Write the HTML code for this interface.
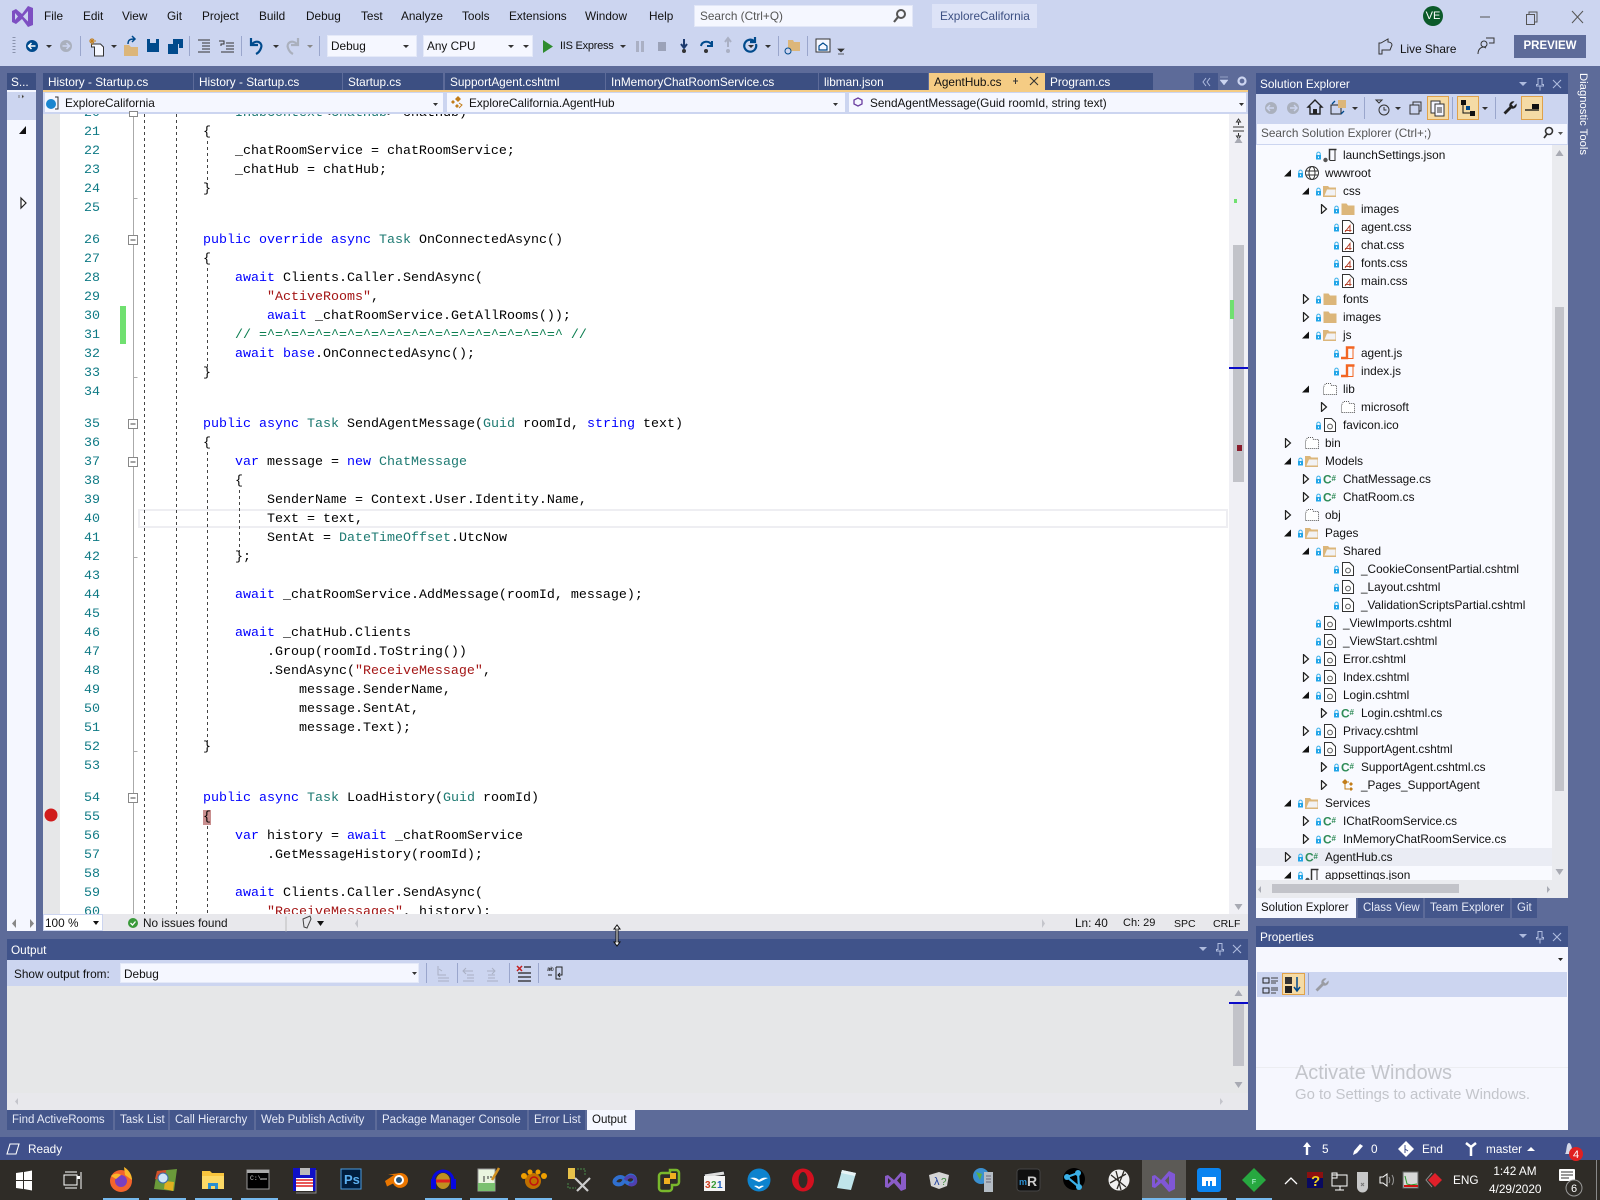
<!DOCTYPE html>
<html><head><meta charset="utf-8"><title>ExploreCalifornia</title>
<style>
*{box-sizing:border-box}
html,body{margin:0;padding:0}
body{width:1600px;height:1200px;overflow:hidden;position:relative;background:#5d6b99;font:11.8px "Liberation Sans",sans-serif;color:#111}
.a{position:absolute}
.x{position:absolute;white-space:nowrap;line-height:16px}
#top{left:0;top:0;width:1600px;height:66px;background:#ccd5f0}
.tab{position:absolute;top:73px;height:17px;background:#3c4f82;color:#fff;line-height:18px;padding-left:5px;white-space:nowrap;overflow:hidden}
.cb{position:absolute;background:#f5f7ff;border:1px solid #e4e9f8}
.nav{position:absolute;top:92px;height:22px;background:#f5f7ff;border:2px solid #ccd5f0;border-top:1px solid #ccd5f0;line-height:21px;white-space:nowrap}
#code{left:43px;top:114px;width:1186px;height:800px;overflow:hidden;background:#fff}
#lines{position:absolute;left:0;top:-10px;width:1186px;font:13.33px/19px "Liberation Mono",monospace;color:#000}
.l{height:19px;position:relative;white-space:pre;padding-left:96px}
.l b{position:absolute;left:0;width:57px;text-align:right;font-weight:normal;color:#0f7a85}
.g{margin-top:13px}
i{font-style:normal}
.k{color:#0000ff}.t{color:#1e7a72}.s{color:#a31515}.c{color:#0a7d4f}
.st{position:absolute;white-space:nowrap;line-height:16px;color:#fff}
#tree{left:1256px;top:145px;width:296px;height:744px;overflow:hidden;background:#f9faff}
#rows{position:absolute;left:0;top:1px;width:296px}
.r{height:18px;position:relative;white-space:nowrap}
.r svg{position:absolute;top:1px}
.r span{position:absolute;top:1px;line-height:16px;left:calc(var(--T) + 0px)}
.A{--T:69px}.B{--T:87px}.C{--T:105px}
.r .e{left:calc(var(--T) - 41px);top:4px}
.r .lk{left:calc(var(--T) - 28px);top:5px}
.r .ic{left:calc(var(--T) - 21px)}
.btab{position:absolute;height:20px;line-height:21px;padding-left:5px;background:#44568b;color:#e6eaf7;white-space:nowrap;font-size:11.5px;overflow:hidden}
</style></head><body>
<svg width="0" height="0" style="position:absolute"><defs>
<symbol id="op" viewBox="0 0 8 10"><path d="M7 1.5V8.5H0z" fill="#111"/></symbol>
<symbol id="cl" viewBox="0 0 8 10"><path d="M1.5 .5L6.5 5 1.5 9.500z" fill="#fff" stroke="#222" stroke-width="1.200"/></symbol>
<symbol id="lk" viewBox="0 0 7 10"><path d="M1.800 4V2.800a1.700 1.700 0 0 1 3.400 0V4" fill="none" stroke="#3ab0ea" stroke-width="1"/><rect x="1" y="4" width="5" height="4.500" fill="#22a5e8"/><rect x="3" y="5.500" width="1" height="1.500" fill="#fff"/></symbol>
<symbol id="f" viewBox="0 0 16 16"><path d="M1.500 2.500h5l1.500 2h6.500v9.500H1.500z" fill="#dcb67a"/></symbol>
<symbol id="fo" viewBox="0 0 16 16"><path d="M1 3h5l1.500 1.500H14V14H1z" fill="#dcb67a"/><path d="M2.500 12.500L5 6.500h8.500v6z" fill="#f2f2f4"/></symbol>
<symbol id="fd" viewBox="0 0 16 16"><path d="M1.500 13.500V6l2-3.500h5l1 2h5v9z" fill="#fff" stroke="#555" stroke-dasharray="1 1"/></symbol>
<symbol id="css" viewBox="0 0 16 16"><path d="M2.500 1.500h7l4 4v9h-11z" fill="#fff" stroke="#333"/><path d="M5 13L10 6.500V13M5 11.500h6.500" fill="none" stroke="#b5432c"/></symbol>
<symbol id="doc" viewBox="0 0 16 16"><path d="M2.500 1.500h7l4 4v9h-11z" fill="#fff" stroke="#333"/><circle cx="8" cy="9.500" r="2.400" fill="none" stroke="#555"/></symbol>
<symbol id="js" viewBox="0 0 16 16"><path d="M14.500 2.500H7v10.500H1" fill="none" stroke="#f26522" stroke-width="2.400"/><path d="M13 3v10.500H7" fill="none" stroke="#f26522"/></symbol>
<symbol id="json" viewBox="0 0 16 16"><path d="M14.500 2.500H7.500v10.500" fill="none" stroke="#333" stroke-width="1.500"/><path d="M13 3v10.500H7.500" fill="none" stroke="#333"/><circle cx="3.500" cy="13" r="2.200" fill="#555"/></symbol>
<symbol id="glob" viewBox="0 0 16 16"><circle cx="8" cy="8" r="6.500" fill="#fff" stroke="#333"/><ellipse cx="8" cy="8" rx="3" ry="6.500" fill="none" stroke="#333"/><path d="M1.500 6h13M1.500 10h13" stroke="#333"/></symbol>
<symbol id="cs" viewBox="0 0 16 16"><text x="1" y="12.500" font-family="Liberation Sans" font-weight="bold" font-size="12" fill="#2e8b57">C</text><text x="9.500" y="10" font-family="Liberation Sans" font-weight="bold" font-size="8" fill="#2e8b57">#</text></symbol>
<symbol id="cl2" viewBox="0 0 16 16"><path d="M2 5l3-3 3 3-3 3zM9 7l2-2 2 2-2 2zM9 12l2-2 2 2-2 2z" fill="#c27d1a"/><path d="M5 8v4h4M8 5h1" stroke="#c27d1a" fill="none"/></symbol>
<symbol id="pin" viewBox="0 0 10 14"><path d="M3 1.500h4v6h1.500v1.500h-7V7.500H3zM5 9v4.500" fill="none" stroke="currentColor"/></symbol>
<symbol id="xx" viewBox="0 0 10 10"><path d="M1 1l8 8M9 1l-8 8" stroke="currentColor" stroke-width="1.100" fill="none"/></symbol>
<symbol id="dn" viewBox="0 0 8 4"><path d="M0 0h8L4 4z" fill="currentColor"/></symbol>
<symbol id="wr" viewBox="0 0 16 16"><path d="M14.500 3.500l-3 3-2-2 3-3a4 4 0 0 0-5 5L1.500 12.500l2 2 6-6a4 4 0 0 0 5-5z" fill="currentColor"/></symbol>
</defs></svg>

<div class="a" id="top"></div>
<div class="a" style="left:0;top:66px;width:7px;height:1071px;background:#5d6b99"></div>

<!-- menu -->
<span class="x" style="left:44px;top:8px">File</span><span class="x" style="left:83px;top:8px">Edit</span><span class="x" style="left:122px;top:8px">View</span><span class="x" style="left:167px;top:8px">Git</span><span class="x" style="left:202px;top:8px">Project</span><span class="x" style="left:259px;top:8px">Build</span><span class="x" style="left:306px;top:8px">Debug</span><span class="x" style="left:361px;top:8px">Test</span><span class="x" style="left:401px;top:8px">Analyze</span><span class="x" style="left:462px;top:8px">Tools</span><span class="x" style="left:509px;top:8px">Extensions</span><span class="x" style="left:585px;top:8px">Window</span><span class="x" style="left:649px;top:8px">Help</span>
<div class="a" style="left:694px;top:5px;width:219px;height:22px;background:#f5f7ff;border:1px solid #e2e7f7"></div>
<span class="x" style="left:700px;top:8px;color:#555">Search (Ctrl+Q)</span>
<div class="a" style="left:932px;top:4px;width:105px;height:24px;background:#dde3f7"></div>
<span class="x" style="left:940px;top:8px;color:#3c4f82">ExploreCalifornia</span>
<div class="a" style="left:1423px;top:6px;width:20px;height:20px;border-radius:50%;background:#0b5a2a;color:#fff;text-align:center;line-height:20px;font-size:11px">VE</div>

<!-- toolbar combos -->
<div class="cb" style="left:327px;top:35px;width:90px;height:22px"></div><span class="x" style="left:331px;top:38px">Debug</span>
<div class="cb" style="left:423px;top:35px;width:110px;height:22px"></div><span class="x" style="left:427px;top:38px">Any CPU</span>
<span class="x" style="left:560px;top:38px;font-size:11px;letter-spacing:-.25px">IIS Express</span>
<span class="x" style="left:1400px;top:41px">Live Share</span>
<div class="a" style="left:1514px;top:35px;width:72px;height:23px;background:#5d6b99;color:#fff;font-weight:bold;font-size:11.500px;text-align:center;line-height:23px">PREVIEW</div>

<!-- left sidebar -->
<div class="a" style="left:7px;top:73px;width:29px;height:858px;background:#f5f7ff"></div>
<div class="a" style="left:7px;top:73px;width:29px;height:17px;background:#3c4f82;color:#fff;padding-left:4px;line-height:18px">S...</div>
<div class="a" style="left:7px;top:92px;width:29px;height:28px;background:#ccd5f0"></div>

<!-- tabs -->
<div class="tab" style="left:43px;width:150px">History - Startup.cs</div>
<div class="tab" style="left:194px;width:148px">History - Startup.cs</div>
<div class="tab" style="left:343px;width:100px">Startup.cs</div>
<div class="tab" style="left:445px;width:160px">SupportAgent.cshtml</div>
<div class="tab" style="left:606px;width:212px">InMemoryChatRoomService.cs</div>
<div class="tab" style="left:819px;width:109px">libman.json</div>
<div class="tab" style="left:929px;width:116px;background:#f5cc84;color:#111">AgentHub.cs</div>
<div class="tab" style="left:1045px;width:108px">Program.cs</div>
<div class="a" style="left:1194px;top:73px;width:24px;height:17px;background:#44568b"></div>
<div class="a" style="left:43px;top:90px;width:1205px;height:2px;background:#f5cc84"></div>

<!-- nav bar -->
<div class="nav" style="left:43px;width:402px;padding-left:20px">ExploreCalifornia</div>
<div class="nav" style="left:445px;width:402px;padding-left:22px">ExploreCalifornia.AgentHub</div>
<div class="nav" style="left:847px;width:401px;padding-left:21px">SendAgentMessage(Guid roomId, string text)</div>

<!-- editor -->
<div class="a" id="code">
<div class="a" style="left:0;top:0;width:17px;height:800px;background:#e6e7e8"></div>
<div class="a" style="left:95px;top:395px;width:1090px;height:19px;border:2px solid #eeeef2"></div>
<div id="lines">
<div class="l"><b>20</b>            <i class="t">IHubContext</i>&lt;<i class="t">ChatHub</i>&gt; chatHub)</div>
<div class="l"><b>21</b>        {</div>
<div class="l"><b>22</b>            _chatRoomService = chatRoomService;</div>
<div class="l"><b>23</b>            _chatHub = chatHub;</div>
<div class="l"><b>24</b>        }</div>
<div class="l"><b>25</b></div>
<div class="l g"><b>26</b>        <i class="k">public</i> <i class="k">override</i> <i class="k">async</i> <i class="t">Task</i> OnConnectedAsync()</div>
<div class="l"><b>27</b>        {</div>
<div class="l"><b>28</b>            <i class="k">await</i> Clients.Caller.SendAsync(</div>
<div class="l"><b>29</b>                <i class="s">"ActiveRooms"</i>,</div>
<div class="l"><b>30</b>                <i class="k">await</i> _chatRoomService.GetAllRooms());</div>
<div class="l"><b>31</b>            <i class="c">// =^=^=^=^=^=^=^=^=^=^=^=^=^=^=^=^=^=^=^ //</i></div>
<div class="l"><b>32</b>            <i class="k">await</i> <i class="k">base</i>.OnConnectedAsync();</div>
<div class="l"><b>33</b>        }</div>
<div class="l"><b>34</b></div>
<div class="l g"><b>35</b>        <i class="k">public</i> <i class="k">async</i> <i class="t">Task</i> SendAgentMessage(<i class="t">Guid</i> roomId, <i class="k">string</i> text)</div>
<div class="l"><b>36</b>        {</div>
<div class="l"><b>37</b>            <i class="k">var</i> message = <i class="k">new</i> <i class="t">ChatMessage</i></div>
<div class="l"><b>38</b>            {</div>
<div class="l"><b>39</b>                SenderName = Context.User.Identity.Name,</div>
<div class="l"><b>40</b>                Text = text,</div>
<div class="l"><b>41</b>                SentAt = <i class="t">DateTimeOffset</i>.UtcNow</div>
<div class="l"><b>42</b>            };</div>
<div class="l"><b>43</b></div>
<div class="l"><b>44</b>            <i class="k">await</i> _chatRoomService.AddMessage(roomId, message);</div>
<div class="l"><b>45</b></div>
<div class="l"><b>46</b>            <i class="k">await</i> _chatHub.Clients</div>
<div class="l"><b>47</b>                .Group(roomId.ToString())</div>
<div class="l"><b>48</b>                .SendAsync(<i class="s">"ReceiveMessage"</i>,</div>
<div class="l"><b>49</b>                    message.SenderName,</div>
<div class="l"><b>50</b>                    message.SentAt,</div>
<div class="l"><b>51</b>                    message.Text);</div>
<div class="l"><b>52</b>        }</div>
<div class="l"><b>53</b></div>
<div class="l g"><b>54</b>        <i class="k">public</i> <i class="k">async</i> <i class="t">Task</i> LoadHistory(<i class="t">Guid</i> roomId)</div>
<div class="l"><b>55</b>        <i style="background:#c98f8f">{</i></div>
<div class="l"><b>56</b>            <i class="k">var</i> history = <i class="k">await</i> _chatRoomService</div>
<div class="l"><b>57</b>                .GetMessageHistory(roomId);</div>
<div class="l"><b>58</b></div>
<div class="l"><b>59</b>            <i class="k">await</i> Clients.Caller.SendAsync(</div>
<div class="l"><b>60</b>                <i class="s">"ReceiveMessages"</i>, history);</div>
</div>
</div>

<!-- editor scrollbar -->
<div class="a" style="left:1229px;top:114px;width:19px;height:800px;background:#f0f0f5"></div>
<div class="a" style="left:1233px;top:245px;width:11px;height:237px;background:#c2c3c9"></div>

<!-- editor status -->
<div class="a" style="left:43px;top:914px;width:1205px;height:17px;background:#e8e8ec"></div>
<div class="a" style="left:43px;top:914px;width:60px;height:17px;background:#fff;border:1px solid #ccd5f0"></div>
<span class="x" style="left:45px;top:915px">100 %</span>
<span class="x" style="left:143px;top:915px">No issues found</span>
<span class="x" style="left:1075px;top:915px">Ln: 40</span>
<span class="x" style="left:1123px;top:915px;font-size:11px">Ch: 29</span>
<span class="x" style="left:1174px;top:916px;font-size:10.5px">SPC</span>
<span class="x" style="left:1213px;top:916px;font-size:10.5px">CRLF</span>

<!-- output -->
<div class="a" style="left:7px;top:939px;width:1241px;height:21px;background:#40538a"></div>
<span class="x" style="left:11px;top:942px;color:#fff">Output</span>
<div class="a" style="left:7px;top:960px;width:1241px;height:26px;background:#ccd5f0"></div>
<span class="x" style="left:14px;top:966px">Show output from:</span>
<div class="cb" style="left:120px;top:963px;width:299px;height:20px"></div>
<span class="x" style="left:124px;top:966px">Debug</span>
<div class="a" style="left:7px;top:986px;width:1241px;height:124px;background:#e6e7e8"></div>
<div class="a" style="left:7px;top:1093px;width:1241px;height:17px;background:#e8e8ec"></div>
<div class="a" style="left:1233px;top:1003px;width:11px;height:63px;background:#c2c3c9"></div>
<div class="btab" style="left:7px;top:1110px;width:106px">Find ActiveRooms</div>
<div class="btab" style="left:115px;top:1110px;width:53px">Task List</div>
<div class="btab" style="left:170px;top:1110px;width:84px">Call Hierarchy</div>
<div class="btab" style="left:256px;top:1110px;width:119px">Web Publish Activity</div>
<div class="btab" style="left:377px;top:1110px;width:150px">Package Manager Console</div>
<div class="btab" style="left:529px;top:1110px;width:56px">Error List</div>
<div class="btab" style="left:587px;top:1110px;width:48px;background:#f5f7ff;color:#111">Output</div>

<!-- solution explorer -->
<div class="a" style="left:1256px;top:73px;width:312px;height:21px;background:#40538a"></div>
<span class="x" style="left:1260px;top:76px;color:#fff">Solution Explorer</span>
<div class="a" style="left:1256px;top:94px;width:312px;height:29px;background:#ccd5f0"></div>
<div class="a" style="left:1256px;top:123px;width:312px;height:22px;background:#f5f7ff;border:1px solid #ccd5f0"></div>
<span class="x" style="left:1261px;top:125px;color:#555">Search Solution Explorer (Ctrl+;)</span>
<div class="a" id="tree"><div id="rows">
<div class="r B"><svg class="lk" width="7" height="10"><use href="#lk"/></svg><svg class="ic" width="16" height="16"><use href="#json"/></svg><span>launchSettings.json</span></div>
<div class="r A"><svg class="e" width="8" height="10"><use href="#op"/></svg><svg class="lk" width="7" height="10"><use href="#lk"/></svg><svg class="ic" width="16" height="16"><use href="#glob"/></svg><span style="left:69px">wwwroot</span></div>
<div class="r B"><svg class="e" width="8" height="10"><use href="#op"/></svg><svg class="lk" width="7" height="10"><use href="#lk"/></svg><svg class="ic" width="16" height="16"><use href="#fo"/></svg><span>css</span></div>
<div class="r C"><svg class="e" width="8" height="10"><use href="#cl"/></svg><svg class="lk" width="7" height="10"><use href="#lk"/></svg><svg class="ic" width="16" height="16"><use href="#f"/></svg><span>images</span></div>
<div class="r C"><svg class="lk" width="7" height="10"><use href="#lk"/></svg><svg class="ic" width="16" height="16"><use href="#css"/></svg><span>agent.css</span></div>
<div class="r C"><svg class="lk" width="7" height="10"><use href="#lk"/></svg><svg class="ic" width="16" height="16"><use href="#css"/></svg><span>chat.css</span></div>
<div class="r C"><svg class="lk" width="7" height="10"><use href="#lk"/></svg><svg class="ic" width="16" height="16"><use href="#css"/></svg><span>fonts.css</span></div>
<div class="r C"><svg class="lk" width="7" height="10"><use href="#lk"/></svg><svg class="ic" width="16" height="16"><use href="#css"/></svg><span>main.css</span></div>
<div class="r B"><svg class="e" width="8" height="10"><use href="#cl"/></svg><svg class="lk" width="7" height="10"><use href="#lk"/></svg><svg class="ic" width="16" height="16"><use href="#f"/></svg><span>fonts</span></div>
<div class="r B"><svg class="e" width="8" height="10"><use href="#cl"/></svg><svg class="lk" width="7" height="10"><use href="#lk"/></svg><svg class="ic" width="16" height="16"><use href="#f"/></svg><span>images</span></div>
<div class="r B"><svg class="e" width="8" height="10"><use href="#op"/></svg><svg class="lk" width="7" height="10"><use href="#lk"/></svg><svg class="ic" width="16" height="16"><use href="#fo"/></svg><span>js</span></div>
<div class="r C"><svg class="lk" width="7" height="10"><use href="#lk"/></svg><svg class="ic" width="16" height="16"><use href="#js"/></svg><span>agent.js</span></div>
<div class="r C"><svg class="lk" width="7" height="10"><use href="#lk"/></svg><svg class="ic" width="16" height="16"><use href="#js"/></svg><span>index.js</span></div>
<div class="r B"><svg class="e" width="8" height="10"><use href="#op"/></svg><svg class="ic" width="16" height="16"><use href="#fd"/></svg><span>lib</span></div>
<div class="r C"><svg class="e" width="8" height="10"><use href="#cl"/></svg><svg class="ic" width="16" height="16"><use href="#fd"/></svg><span>microsoft</span></div>
<div class="r B"><svg class="lk" width="7" height="10"><use href="#lk"/></svg><svg class="ic" width="16" height="16"><use href="#doc"/></svg><span>favicon.ico</span></div>
<div class="r A"><svg class="e" width="8" height="10"><use href="#cl"/></svg><svg class="ic" width="16" height="16"><use href="#fd"/></svg><span>bin</span></div>
<div class="r A"><svg class="e" width="8" height="10"><use href="#op"/></svg><svg class="lk" width="7" height="10"><use href="#lk"/></svg><svg class="ic" width="16" height="16"><use href="#fo"/></svg><span>Models</span></div>
<div class="r B"><svg class="e" width="8" height="10"><use href="#cl"/></svg><svg class="lk" width="7" height="10"><use href="#lk"/></svg><svg class="ic" width="16" height="16"><use href="#cs"/></svg><span>ChatMessage.cs</span></div>
<div class="r B"><svg class="e" width="8" height="10"><use href="#cl"/></svg><svg class="lk" width="7" height="10"><use href="#lk"/></svg><svg class="ic" width="16" height="16"><use href="#cs"/></svg><span>ChatRoom.cs</span></div>
<div class="r A"><svg class="e" width="8" height="10"><use href="#cl"/></svg><svg class="ic" width="16" height="16"><use href="#fd"/></svg><span>obj</span></div>
<div class="r A"><svg class="e" width="8" height="10"><use href="#op"/></svg><svg class="lk" width="7" height="10"><use href="#lk"/></svg><svg class="ic" width="16" height="16"><use href="#fo"/></svg><span>Pages</span></div>
<div class="r B"><svg class="e" width="8" height="10"><use href="#op"/></svg><svg class="lk" width="7" height="10"><use href="#lk"/></svg><svg class="ic" width="16" height="16"><use href="#fo"/></svg><span>Shared</span></div>
<div class="r C"><svg class="lk" width="7" height="10"><use href="#lk"/></svg><svg class="ic" width="16" height="16"><use href="#doc"/></svg><span>_CookieConsentPartial.cshtml</span></div>
<div class="r C"><svg class="lk" width="7" height="10"><use href="#lk"/></svg><svg class="ic" width="16" height="16"><use href="#doc"/></svg><span>_Layout.cshtml</span></div>
<div class="r C"><svg class="lk" width="7" height="10"><use href="#lk"/></svg><svg class="ic" width="16" height="16"><use href="#doc"/></svg><span>_ValidationScriptsPartial.cshtml</span></div>
<div class="r B"><svg class="lk" width="7" height="10"><use href="#lk"/></svg><svg class="ic" width="16" height="16"><use href="#doc"/></svg><span>_ViewImports.cshtml</span></div>
<div class="r B"><svg class="lk" width="7" height="10"><use href="#lk"/></svg><svg class="ic" width="16" height="16"><use href="#doc"/></svg><span>_ViewStart.cshtml</span></div>
<div class="r B"><svg class="e" width="8" height="10"><use href="#cl"/></svg><svg class="lk" width="7" height="10"><use href="#lk"/></svg><svg class="ic" width="16" height="16"><use href="#doc"/></svg><span>Error.cshtml</span></div>
<div class="r B"><svg class="e" width="8" height="10"><use href="#cl"/></svg><svg class="lk" width="7" height="10"><use href="#lk"/></svg><svg class="ic" width="16" height="16"><use href="#doc"/></svg><span>Index.cshtml</span></div>
<div class="r B"><svg class="e" width="8" height="10"><use href="#op"/></svg><svg class="lk" width="7" height="10"><use href="#lk"/></svg><svg class="ic" width="16" height="16"><use href="#doc"/></svg><span>Login.cshtml</span></div>
<div class="r C"><svg class="e" width="8" height="10"><use href="#cl"/></svg><svg class="lk" width="7" height="10"><use href="#lk"/></svg><svg class="ic" width="16" height="16"><use href="#cs"/></svg><span>Login.cshtml.cs</span></div>
<div class="r B"><svg class="e" width="8" height="10"><use href="#cl"/></svg><svg class="lk" width="7" height="10"><use href="#lk"/></svg><svg class="ic" width="16" height="16"><use href="#doc"/></svg><span>Privacy.cshtml</span></div>
<div class="r B"><svg class="e" width="8" height="10"><use href="#op"/></svg><svg class="lk" width="7" height="10"><use href="#lk"/></svg><svg class="ic" width="16" height="16"><use href="#doc"/></svg><span>SupportAgent.cshtml</span></div>
<div class="r C"><svg class="e" width="8" height="10"><use href="#cl"/></svg><svg class="lk" width="7" height="10"><use href="#lk"/></svg><svg class="ic" width="16" height="16"><use href="#cs"/></svg><span>SupportAgent.cshtml.cs</span></div>
<div class="r C"><svg class="e" width="8" height="10"><use href="#cl"/></svg><svg class="ic" width="16" height="16"><use href="#cl2"/></svg><span>_Pages_SupportAgent</span></div>
<div class="r A"><svg class="e" width="8" height="10"><use href="#op"/></svg><svg class="lk" width="7" height="10"><use href="#lk"/></svg><svg class="ic" width="16" height="16"><use href="#fo"/></svg><span>Services</span></div>
<div class="r B"><svg class="e" width="8" height="10"><use href="#cl"/></svg><svg class="lk" width="7" height="10"><use href="#lk"/></svg><svg class="ic" width="16" height="16"><use href="#cs"/></svg><span>IChatRoomService.cs</span></div>
<div class="r B"><svg class="e" width="8" height="10"><use href="#cl"/></svg><svg class="lk" width="7" height="10"><use href="#lk"/></svg><svg class="ic" width="16" height="16"><use href="#cs"/></svg><span>InMemoryChatRoomService.cs</span></div>
<div class="r A" style="background:#eaecf4"><svg class="e" width="8" height="10"><use href="#cl"/></svg><svg class="lk" width="7" height="10"><use href="#lk"/></svg><svg class="ic" width="16" height="16"><use href="#cs"/></svg><span>AgentHub.cs</span></div>
<div class="r A"><svg class="e" width="8" height="10"><use href="#op"/></svg><svg class="lk" width="7" height="10"><use href="#lk"/></svg><svg class="ic" width="16" height="16"><use href="#json"/></svg><span>appsettings.json</span></div>
</div></div>
<div class="a" style="left:1552px;top:145px;width:16px;height:744px;background:#eaebef"></div>
<div class="a" style="left:1555px;top:307px;width:9px;height:484px;background:#c2c3c9"></div>
<div class="a" style="left:1256px;top:880px;width:312px;height:18px;background:#eaebef"></div>
<div class="a" style="left:1272px;top:884px;width:187px;height:9px;background:#c2c3c9"></div>
<div class="btab" style="left:1256px;top:898px;width:100px;background:#f5f7ff;color:#111">Solution Explorer</div>
<div class="btab" style="left:1358px;top:898px;width:65px">Class View</div>
<div class="btab" style="left:1425px;top:898px;width:85px">Team Explorer</div>
<div class="btab" style="left:1512px;top:898px;width:25px">Git</div>
<div class="a" style="left:1576px;top:73px;height:90px;writing-mode:vertical-rl;color:#fff;white-space:nowrap;line-height:14px;font-size:11.3px">Diagnostic Tools</div>

<!-- properties -->
<div class="a" style="left:1256px;top:926px;width:312px;height:21px;background:#40538a"></div>
<span class="x" style="left:1260px;top:929px;color:#fff">Properties</span>
<div class="a" style="left:1256px;top:947px;width:312px;height:183px;background:#f6f7fe"></div>
<div class="a" style="left:1257px;top:972px;width:310px;height:25px;background:#ccd5f0"></div>
<div class="a" style="left:1256px;top:1067px;width:312px;height:1px;background:#ecedf1"></div>
<span class="x" style="left:1295px;top:1061px;font-size:19.9px;line-height:24px;color:#c3c5cb">Activate Windows</span>
<span class="x" style="left:1295px;top:1086px;font-size:14.9px;line-height:18px;color:#c3c5cb">Go to Settings to activate Windows.</span>

<!-- status bar -->
<div class="a" style="left:0;top:1137px;width:1600px;height:23px;background:#40508b"></div>
<span class="st" style="left:28px;top:1141px">Ready</span>
<span class="st" style="left:1322px;top:1141px">5</span>
<span class="st" style="left:1371px;top:1141px">0</span>
<span class="st" style="left:1422px;top:1141px">End</span>
<span class="st" style="left:1486px;top:1141px">master</span>

<!-- taskbar -->
<div class="a" style="left:0;top:1160px;width:1600px;height:40px;background:#2f2c27"></div>
<div class="a" style="left:1142px;top:1160px;width:44px;height:40px;background:#5c5a56"></div>
<span class="st" style="left:1453px;top:1172px">ENG</span>
<span class="st" style="left:1489px;top:1163px;width:52px;text-align:center">1:42 AM</span>
<span class="st" style="left:1489px;top:1181px;width:52px;text-align:center">4/29/2020</span>

<!-- overlay -->
<svg class="a" style="left:0;top:0" width="1600" height="1200" viewBox="0 0 1600 1200">
<!-- VS logo -->
<path d="M12 12l4-2 6 5 6-8 5 2v17l-5 2-6-8-6 5-4-2zM15 14v7l3-3.500zM28 12l-5 5.500 5 5z" fill="#7d4fc2" fill-rule="evenodd" transform="translate(0,-1)"/>
<!-- search magnifier -->
<circle cx="901" cy="14" r="4" fill="none" stroke="#555" stroke-width="2"/><path d="M898 17l-4 5" stroke="#555" stroke-width="2.200"/>
<!-- window buttons -->
<path d="M1480 17h10" stroke="#555"/><rect x="1526.500" y="14.500" width="8" height="10" fill="none" stroke="#555"/><path d="M1529 14.500v-2.500h8v10h-2.500" fill="none" stroke="#555"/><path d="M1572 11l11 12M1583 11l-11 12" stroke="#555"/>
<!-- toolbar -->
<path d="M14 37v18" stroke="#8a93ad" stroke-width="3" stroke-dasharray="1 2"/>
<circle cx="32" cy="46" r="6" fill="#004a8c"/><path d="M35.500 46h-6M31.500 43l-3 3 3 3" stroke="#fff" stroke-width="1.500" fill="none"/>
<path d="M46 45h6l-3 3z" fill="#333"/>
<circle cx="66" cy="46" r="6" fill="#aab0bd"/><path d="M62.500 46h6M66.500 43l3 3-3 3" stroke="#ccd5f0" stroke-width="1.500" fill="none"/>
<path d="M80.500 36v20M189.500 36v20M241.500 36v20M319.500 36v20M778.500 36v20M807.500 36v20" stroke="#9aa6cc"/>
<path d="M91.500 44h9l3 3v9h-9v-9h-3z" fill="#f5f7ff" stroke="#333"/><path d="M92 38v7M89 41h7M90 39l4 4M94 39l-4 4" stroke="#c27d1a"/>
<path d="M111 45h6l-3 3zM273 45h6l-3 3zM748 45h6l-3 3zM765 45h6l-3 3zM620 45h6l-3 3z" fill="#333"/>
<path d="M307 45h6l-3 3z" fill="#888"/>
<path d="M124 45h5l2 2h7v9h-14z" fill="#dcb67a"/><path d="M128 44c0-4 2-5 6-5M132 36l3 3-3 3" stroke="#004a8c" stroke-width="1.500" fill="none"/>
<path d="M147 39h12v13h-12z" fill="#004a8c"/><rect x="150" y="39" width="6" height="4" fill="#ccd5f0"/>
<path d="M168 44h10v10h-10z" fill="#004a8c"/><path d="M173 39h10v9h-4v-4h-6z" fill="#004a8c"/>
<path d="M198 40h12M202 43h8M202 46h8M202 49h8M198 52h12" stroke="#333"/>
<path d="M219 41h5v3h-3v2M226 43h8M226 46h8M226 49h8M221 52h13" stroke="#333" fill="none"/>
<path d="M251 38v7h7M252 44c5-5 11-1 9 4-1 3-3 5-5 6" fill="none" stroke="#004a8c" stroke-width="2.200"/>
<path d="M298 38v7h-7M297 44c-5-5-11-1-9 4 1 3 3 5 5 6" fill="none" stroke="#aab0bd" stroke-width="2.200"/>
<path d="M403 45h6l-3 3zM508 45h6l-3 3z" fill="#333"/>
<path d="M523 45h6l-3 3z" fill="#333"/>
<path d="M543 40v13l10-6.500z" fill="#2e8b2e"/>
<path d="M636 41h3v11h-3zM641 41h3v11h-3z" fill="#aab0c4"/><rect x="658" y="42" width="8" height="9" fill="#9ba2b8"/>
<path d="M684 39v8M681 44l3 4 3-4" stroke="#1c3a6e" stroke-width="2" fill="none"/><circle cx="684" cy="51" r="2" fill="#333"/>
<path d="M701 46c1-5 8-6 11-1M712 41v5h-5" stroke="#004a8c" stroke-width="2" fill="none"/><circle cx="706" cy="51" r="2" fill="#333"/>
<path d="M728 47v-8M725 42l3-4 3 4" stroke="#aab0c4" stroke-width="2" fill="none"/><circle cx="728" cy="51" r="2" fill="#aab0c4"/>
<path d="M756 44a6 6 0 1 1-2-3M755 37v5h-5" fill="none" stroke="#004a8c" stroke-width="2.200"/>
<path d="M788 40h5l1 2h6v9h-12z" fill="#dcb67a"/><circle cx="788" cy="51" r="3" fill="#ccd5f0" stroke="#004a8c"/>
<rect x="816" y="39" width="14" height="13" fill="#f5f7ff" stroke="#333"/><path d="M819 46l4-3 4 3v4h-8z" fill="none" stroke="#004a8c" stroke-width="1.200"/>
<path d="M838 49h6l-3 3zM838 54h6" fill="#333" stroke="#333" stroke-width=".7"/>
<path d="M1381 43l7-4v3c2 0 4 1 4 3l-2 5h-8v4h-3V43z" fill="none" stroke="#333"/>
<circle cx="1484" cy="44" r="3" fill="none" stroke="#333"/><path d="M1478 54c0-5 3-7 6-7l2 1M1486 38h8v5h-5" fill="none" stroke="#333"/>
<!-- tabs chrome -->
<path d="M1013 81h5M1015.500 78v6" stroke="#333"/><path d="M1030 77l8 8M1038 77l-8 8" stroke="#333" stroke-width="1.100"/>
<path d="M1206 78l-3 4 3 4M1210 78l-3 4 3 4" stroke="#aebbde" fill="none"/>
<path d="M1220 77h8M1220 80h8l-4 5z" fill="#ccd5f0" stroke="#ccd5f0" stroke-width=".5"/>
<circle cx="1242" cy="81" r="3.500" fill="none" stroke="#ccd5f0" stroke-width="2.200"/>
<!-- nav icons -->
<circle cx="51" cy="104" r="5" fill="#1a86d0"/><path d="M55 97h3v12h-3" fill="none" stroke="#333"/>
<path d="M455 99l3-3 3 3-3 3zM455 106l2-2 2 2-2 2zM451 102l2-2 2 2-2 2z" fill="#c27d1a"/><path d="M459 103l3 2-3 3" stroke="#c27d1a" fill="none"/>
<path d="M858 98l4 2v4l-4 2-4-2v-4z" fill="none" stroke="#6b3fa0" stroke-width="1.300"/>
<path d="M433 103h5l-2.500 3zM833 103h5l-2.500 3zM1239 103h5l-2.500 3z" fill="#333"/>
<!-- side triangles -->
<path d="M26 126v8h-7z" fill="#111"/><path d="M21 198l5 5-5 5z" fill="#fff" stroke="#222" stroke-width="1.200"/>
<path d="M19 95v3M22 95l1.500 1.500L22 98" stroke="#777"/>
<!-- indent guides -->
<g stroke="#444" stroke-dasharray="3 3"><path d="M144.500 114v800M176.500 114v800M207.500 141v52M207.500 268v108M207.500 452v298M207.500 826v88M239.500 490v66"/></g>
<!-- fold lines -->
<g stroke="#aaa" fill="none"><path d="M133.500 114v800M133.500 198.500h4M133.500 377.500h4M133.500 751.500h4M133.500 557.500h4"/></g>
<g fill="#fff" stroke="#888"><rect x="129.500" y="111.500" width="8" height="5"/><rect x="128.500" y="235.500" width="9" height="9"/><rect x="128.500" y="419.500" width="9" height="9"/><rect x="128.500" y="457.500" width="9" height="9"/><rect x="128.500" y="793.500" width="9" height="9"/></g>
<path d="M130.500 240h5M130.500 424h5M130.500 462h5M130.500 798h5" stroke="#444"/>
<rect x="120" y="306" width="6" height="38" fill="#70e070"/>
<circle cx="51" cy="815" r="6.500" fill="#d01c1c"/>
<!-- editor scroll -->
<path d="M1233 127h11M1233 131h11M1238.500 119l-2 3h4zM1238.500 139l-2-3h4zM1238.500 122v3M1238.500 133v3" stroke="#333" fill="none"/>
<path d="M1238.500 137l4 6h-8z" fill="#a8aab3"/>
<path d="M1238.500 910l4-6h-8z" fill="#a8aab3"/>
<rect x="1234" y="199" width="3" height="4" fill="#70e070"/><rect x="1230" y="300" width="4" height="19" fill="#70e070"/>
<rect x="1229" y="367" width="19" height="2" fill="#0a0ac8"/><rect x="1237" y="445" width="5" height="6" fill="#8a1c2c"/>
<!-- editor status icons -->
<path d="M93 921h6l-3 4z" fill="#111"/>
<path d="M13 919l-4 4.500 4 4.500zM27 919l4 4.500-4 4.500z" fill="#888" transform="translate(3,0)"/>
<circle cx="133" cy="923" r="5" fill="#3a9a3a"/><path d="M130.500 923l2 2 3-3.500" stroke="#fff" stroke-width="1.300" fill="none"/>
<path d="M286 916.500v15" stroke="#bbb"/>
<path d="M303 919l7-3 1 3-4 9-3-1z" fill="none" stroke="#444"/><path d="M317 921h7l-3.500 5z" fill="#111"/>
<path d="M358 919l-3 4.500 3 4.500zM1042 919l3 4.500-3 4.500z" fill="#c4c5cb"/>
<!-- panel title icons -->
<g color="#aebbde">
<use href="#dn" x="1199" y="947" width="8" height="4"/><use href="#pin" x="1215" y="942" width="10" height="14"/><use href="#xx" x="1232" y="944" width="10" height="10"/>
<use href="#dn" x="1519" y="82" width="8" height="4"/><use href="#pin" x="1535" y="77" width="10" height="14"/><use href="#xx" x="1552" y="79" width="10" height="10"/>
<use href="#dn" x="1519" y="934" width="8" height="4"/><use href="#pin" x="1535" y="930" width="10" height="14"/><use href="#xx" x="1552" y="932" width="10" height="10"/>
</g>
<!-- SE toolbar -->
<circle cx="1271" cy="108" r="6" fill="#aab0bd"/><path d="M1274 108h-6M1270 105l-3 3 3 3" stroke="#ccd5f0" stroke-width="1.400" fill="none"/>
<circle cx="1293" cy="108" r="6" fill="#aab0bd"/><path d="M1290 108h6M1294 105l3 3-3 3" stroke="#ccd5f0" stroke-width="1.400" fill="none"/>
<path d="M1315 100l7 7h-2v7h-10v-7h-2z" fill="#ccd5f0" stroke="#222" stroke-width="1.400"/><rect x="1313" y="109" width="4" height="5" fill="#222"/>
<rect x="1331" y="105" width="10" height="9" fill="none" stroke="#222"/><rect x="1338" y="100" width="8" height="8" fill="#dcb67a"/><path d="M1332 104l3-3M1344 111l-3 3" stroke="#004a8c" stroke-width="1.300"/>
<path d="M1352 107h6l-3 3zM1395 107h6l-3 3zM1482 107h6l-3 3z" fill="#333"/>
<path d="M1364.500 97v22M1452.500 97v22M1495.500 97v22" stroke="#9aa6cc"/>
<circle cx="1384" cy="110" r="5" fill="none" stroke="#333"/><path d="M1384 107v3h2.500M1376 100h6l-3 3z" stroke="#333" fill="none"/>
<rect x="1410" y="105" width="9" height="9" fill="none" stroke="#333"/><path d="M1413 105v-3h8v9h-2" fill="none" stroke="#333"/>
<g fill="#f5dba5" stroke="#e0a24a"><rect x="1427.500" y="96.500" width="21" height="23"/><rect x="1457.500" y="96.500" width="21" height="23"/><rect x="1521.500" y="96.500" width="21" height="23"/><rect x="1282.500" y="973.500" width="22" height="21"/></g>
<rect x="1431" y="101" width="9" height="12" fill="#f5f7ff" stroke="#333"/><rect x="1435" y="104" width="9" height="12" fill="#f5f7ff" stroke="#333"/><path d="M1437 108h5M1437 110h5M1437 112h5" stroke="#333"/>
<rect x="1461" y="100" width="5" height="5" fill="#111"/><rect x="1466" y="106" width="4" height="4" fill="#004a8c"/><rect x="1470" y="111" width="5" height="5" fill="#111"/><path d="M1463 105v8h7" stroke="#111" fill="none"/>
<g color="#222"><use href="#wr" x="1502" y="100" width="16" height="16"/></g>
<path d="M1525 110h14" stroke="#111" stroke-width="1.300"/><rect x="1532" y="104" width="7" height="5" fill="#111"/>
<!-- SE search -->
<circle cx="1549" cy="131" r="3.500" fill="none" stroke="#333" stroke-width="1.600"/><path d="M1547 134l-3 4" stroke="#333" stroke-width="1.800"/><path d="M1558 132h5l-2.500 3z" fill="#555"/>
<path d="M1559.500 150l4 6h-8z" fill="#a8aab3"/><path d="M1559.500 875l4-6h-8z" fill="#a8aab3"/>
<path d="M1261 886l-3 3.500 3 3.500zM1547 886l3 3.500-3 3.500z" fill="#a8aab3"/>
<!-- output toolbar -->
<path d="M426.500 963v20M457.500 963v20M509.500 963v20M538.500 963v20" stroke="#9aa6cc"/>
<path d="M412 972h5l-2.500 3z" fill="#333"/>
<path d="M438 966v9h8M442 971l-3-2M438 978h11M438 981h11" stroke="#aab0c4" fill="none"/>
<path d="M466 968l-3 3 3 3M463 971h10M467 975h7M467 978h7M463 981h11" stroke="#aab0c4" fill="none"/>
<path d="M492 968l3 3-3 3M487 971h8M488 975h7M488 978h7M487 981h11" stroke="#aab0c4" fill="none"/>
<path d="M517 966l5 5M522 966l-5 5" stroke="#c42020" stroke-width="1.500"/><path d="M524 967h7M518 973h13M518 977h13M518 981h13" stroke="#222" stroke-width="1.300"/>
<path d="M556 967v12h5M552 969h-4M552 975h-4" stroke="#222" fill="none"/><path d="M556 967h6v8h-4M560 973l-2 2 2 2" stroke="#222" fill="none"/>
<text x="547" y="971" font-family="Liberation Sans" font-size="6" fill="#222">ab</text>
<!-- output scroll -->
<path d="M1238.500 990l4 6h-8z" fill="#a8aab3"/><path d="M1238.500 1088l4-6h-8z" fill="#a8aab3"/>
<rect x="1229" y="1002" width="19" height="2" fill="#0a0ac8"/>
<path d="M18 1098l-3 3.500 3 3.500zM1220 1098l3 3.500-3 3.500z" fill="#c4c5cb"/>
<!-- properties -->
<path d="M1558 958h5l-2.500 3z" fill="#222"/>
<path d="M1263 978h6v5h-6zM1263 988h6v5h-6z" fill="none" stroke="#222"/><path d="M1271 978h7M1271 981h7M1271 983h5M1271 988h7M1271 990h7M1271 993h5" stroke="#444"/>
<rect x="1285" y="977" width="7" height="7" fill="#333"/><rect x="1285" y="986" width="7" height="7" fill="#222"/><path d="M1297 977v13M1294 987l3 4 3-4" stroke="#004a8c" stroke-width="1.500" fill="none"/>
<path d="M1308.500 973v22" stroke="#9aa6cc"/><g color="#9a9ca3"><use href="#wr" x="1314" y="977" width="16" height="16"/></g>
<!-- resize cursor -->
<path d="M617 925l-3 4h2v13h-2l3 4 3-4h-2v-13h2z" fill="#fff" stroke="#111"/>
<!-- status icons -->
<path d="M7 1154l3-10h9l-3 10z" fill="none" stroke="#fff" stroke-width="1.100"/>
<path d="M1307 1142l-4 5h2.800v8h2.400v-8h2.800z" fill="#fff"/>
<path d="M1353 1155l1-4 6-7 3 2-6 7z" fill="#fff"/>
<path d="M1406 1141l8 8-8 8-8-8z" fill="#fff"/><path d="M1405 1145v8M1405 1149l3 2" stroke="#40508b"/>
<path d="M1466 1143l5 4 5-4M1471 1147v9" stroke="#fff" stroke-width="2.500" fill="none"/>
<path d="M1527 1151l4-4 4 4z" fill="#fff"/>
<path d="M1565 1154c2-2 1-11 4-11s3 9 5 11z" fill="#d5d9e8"/>
<circle cx="1576" cy="1154" r="7" fill="#e02020"/><text x="1576" y="1158" text-anchor="middle" font-family="Liberation Sans" font-size="11" fill="#fff">4</text>
<!-- taskbar underlines -->
<g fill="#76b9ed"><rect x="103" y="1198" width="36" height="2"/><rect x="149" y="1198" width="37" height="2"/><rect x="195" y="1198" width="37" height="2"/><rect x="241" y="1198" width="37" height="2"/><rect x="425" y="1198" width="37" height="2"/><rect x="470" y="1198" width="38" height="2"/><rect x="515" y="1198" width="37" height="2"/><rect x="1142" y="1198" width="44" height="2"/><rect x="1191" y="1198" width="36" height="2"/><rect x="1236" y="1198" width="36" height="2"/></g>
<!-- windows -->
<path d="M16 1173l7-1v8h-7zM24 1172l8-1.500V1180h-8zM16 1181h7v8l-7-1zM24 1181h8v9.500l-8-1.500z" fill="#fff"/>
<!-- task view -->
<path d="M65 1172h12M65 1188h12M64 1175h13v10H64zM81 1172v17" fill="none" stroke="#fff"/><rect x="77" y="1176" width="3" height="3" fill="#fff"/>
<!-- firefox -->
<circle cx="121" cy="1181" r="11" fill="#f4642c"/><path d="M124 1167c5 3 8 8 8 13l-7-5z" fill="#fcb72a"/><circle cx="121" cy="1181" r="6" fill="#7a3fc0"/><path d="M111 1176c3-3 8-3 10-1l-5 4z" fill="#fcb72a"/>
<!-- search flag -->
<path d="M157 1171l20-2-3 22-20-2z" fill="#6a9a3a"/><path d="M157 1171l9-1-1 10-10-1z" fill="#d0502a"/><path d="M165 1181l9 1-1 9-9-2z" fill="#e0b020"/><circle cx="163" cy="1178" r="5" fill="#cfe6f7" stroke="#3a6aa8"/>
<!-- explorer -->
<path d="M202 1171h8l2 2h12v16h-22z" fill="#f8c53e"/><rect x="202" y="1176" width="22" height="13" fill="#fcd966"/><path d="M208 1183h10v6h-3v-3h-4v3h-3z" fill="#2a8ed0"/>
<!-- cmd -->
<rect x="247" y="1170" width="22" height="19" fill="#000" stroke="#999"/><rect x="247" y="1170" width="22" height="3" fill="#aaa"/><text x="250" y="1180" font-family="Liberation Mono" font-size="6.500" fill="#ccc">C:\</text><path d="M261 1179h6" stroke="#ccc"/>
<!-- floppy -->
<rect x="293" y="1168" width="23" height="23" fill="#1010c8"/><rect x="300" y="1168" width="10" height="7" fill="#bbb"/><rect x="296" y="1178" width="17" height="13" fill="#fff"/><path d="M296 1180h17M296 1183h17M296 1186h17" stroke="#e02020" stroke-width="1.500"/><path d="M316 1170v23h-20" stroke="#888" fill="none"/>
<!-- Ps -->
<rect x="341" y="1169" width="20" height="20" fill="#001d3d" stroke="#4a9be0"/><text x="344" y="1184" font-family="Liberation Sans" font-weight="bold" font-size="13" fill="#5cb0f0">Ps</text>
<!-- blender -->
<path d="M385 1181l9-6-6-.5 9-1c6-2 12 2 11 8a8 8 0 0 1-15 2l-6 3z" fill="#ea7600"/><circle cx="399" cy="1180" r="5" fill="#fff"/><circle cx="399" cy="1180" r="3" fill="#24527a"/>
<!-- headphones -->
<path d="M433 1187v-6a10 10 0 0 1 20 0v6" fill="none" stroke="#0808e0" stroke-width="3"/><rect x="431" y="1179" width="5" height="10" fill="#0808e0"/><rect x="451" y="1179" width="5" height="10" fill="#0808e0"/><ellipse cx="443" cy="1181" rx="7" ry="8" fill="#c09020"/><path d="M436 1181h14" stroke="#e02020" stroke-width="3"/>
<!-- notepad green -->
<path d="M478 1169h17v22h-17z" fill="#e9f5df" stroke="#999"/><rect x="478" y="1183" width="17" height="8" fill="#7ac070"/><path d="M484 1176v6M488 1176v3M491 1178v-2" stroke="#333"/><path d="M499 1168l-7 12" stroke="#d09020" stroke-width="2.500"/>
<!-- gimp-like -->
<circle cx="533" cy="1181" r="8" fill="#c07000"/><circle cx="534" cy="1181" r="4" fill="none" stroke="#c01010" stroke-width="1.500"/><circle cx="524" cy="1176" r="3" fill="#f0a000"/><circle cx="530" cy="1172" r="2.500" fill="#f0a000"/><circle cx="538" cy="1172" r="2.500" fill="#f0a000"/><circle cx="544" cy="1176" r="3" fill="#f0a000"/>
<!-- tools -->
<rect x="568" y="1168" width="7" height="11" fill="#e8c24a"/><path d="M577 1169h8v6M568 1183v5h8" stroke="#4a8a4a" stroke-dasharray="2 1" fill="none"/><path d="M575 1178l13 13M590 1178l-13 13" stroke="#ccc" stroke-width="2.200"/>
<!-- infinity -->
<path d="M615 1180c3-4 8-4 10 0s6 5 9 2-1-8-5-6-5 7-8 8-8 0-6-4z" fill="none" stroke="#3070d0" stroke-width="4"/><path d="M625 1180c3-4 8-5 10-1s-2 7-6 5" fill="none" stroke="#5040b0" stroke-width="3.500"/>
<!-- vmware -->
<path d="M659 1176a3 3 0 0 1 3-3h8v-3h6a3 3 0 0 1 3 3v9a3 3 0 0 1-3 3h-4v3a3 3 0 0 1-3 3h-7a3 3 0 0 1-3-3z" fill="none" stroke="#79b82c" stroke-width="2.500"/><path d="M664 1178h6v6h-6zM670 1173h6v6h-6z" fill="#f0b020"/>
<!-- clapper -->
<path d="M704 1174l20-3 1 4-20 3z" fill="#ddd" stroke="#222"/><rect x="704" y="1176" width="21" height="15" fill="#f4f4f4"/><text x="705" y="1188" font-family="Liberation Sans" font-weight="bold" font-size="10" fill="#d04020">3</text><text x="711" y="1188" font-family="Liberation Sans" font-weight="bold" font-size="10" fill="#3a9a3a">2</text><text x="717" y="1188" font-family="Liberation Sans" font-weight="bold" font-size="10" fill="#2060c0">1</text>
<!-- birds -->
<circle cx="759" cy="1180" r="11.500" fill="#0d83ce"/><path d="M750 1178c4-1 7 0 9 2 2-2 5-3 9-2-3 1-6 3-9 4-3-1-6-3-9-4zM754 1186c2-1 4 0 5 1 1-1 3-2 5-1l-5 3z" fill="#fff"/>
<!-- opera -->
<ellipse cx="803" cy="1180" rx="11" ry="11.500" fill="#d3101f"/><ellipse cx="803" cy="1180" rx="4.500" ry="8" fill="#2f2c27"/>
<!-- note -->
<path d="M842 1170l14 3-5 17-14-2z" fill="#bfe4ea"/><path d="M842 1170l14 3-1 3-14-3z" fill="#e8f4f6"/>
<!-- vs 2019 -->
<path d="M885 1176l3-1 6 5 7-8 5 2v15l-5 2-7-8-6 5-3-1zM888 1178v6l3-3zM901 1176l-4 4.500 4 4.500z" fill="#8a5cc8" fill-rule="evenodd"/>
<!-- lambda box -->
<path d="M929 1175l10-3 10 3-2 11-8 3-8-3z" fill="#d5d5d5"/><text x="934" y="1185" font-family="Liberation Sans" font-size="11" fill="#2040a0">λ</text><text x="941" y="1185" font-family="Liberation Sans" font-size="10" fill="#3a8a3a">?</text>
<!-- globe server -->
<circle cx="981" cy="1176" r="8" fill="#3a90d0"/><path d="M976 1172l6 2-2 6z" fill="#5cb040"/><rect x="984" y="1172" width="9" height="20" fill="#b4bcc4"/><path d="M986 1176h5M986 1179h5M986 1182h5" stroke="#667"/>
<!-- mR -->
<rect x="1017" y="1169" width="23" height="22" rx="3" fill="#101010" stroke="#444"/><text x="1019" y="1185" font-family="Liberation Sans" font-weight="bold" font-size="9" fill="#2a8ed0">m</text><text x="1027" y="1186" font-family="Liberation Sans" font-weight="bold" font-size="14" fill="#ccc">R</text>
<!-- triangle -->
<circle cx="1074" cy="1179" r="11" fill="#000"/><path d="M1067 1177l11-4 1 14z" fill="none" stroke="#3ab0e8" stroke-width="2.200"/><circle cx="1067" cy="1177" r="3" fill="#3ab0e8"/><circle cx="1078" cy="1173" r="3" fill="#3ab0e8"/><circle cx="1079" cy="1187" r="3" fill="#3ab0e8"/>
<!-- knot -->
<circle cx="1119" cy="1180" r="10.500" fill="#f0f0f0"/><path d="M1111 1175l15 12M1110 1183l16-9M1116 1171l5 19M1124 1171l-7 18" stroke="#2f2c27" stroke-width="1.300"/>
<!-- VS active -->
<path d="M1152 1176l3-1 6 5 8-9 6 3v15l-6 3-8-9-6 5-3-1zM1155 1178v6l3-3zM1169 1176l-4 4.500 4 4.500z" fill="#8057d6" fill-rule="evenodd"/>
<!-- maxthon -->
<rect x="1197" y="1168" width="24" height="24" rx="3" fill="#0a84f0"/><path d="M1202 1186v-9h14v9h-4v-5h-2v5h-2v-5h-2v5z" fill="#fff"/>
<!-- green diamond -->
<path d="M1254 1168l12 12-12 12-12-12z" fill="#27a840"/><text x="1254" y="1184" text-anchor="middle" font-family="Liberation Sans" font-size="7" fill="#cfe">F</text>
<!-- tray -->
<path d="M1285 1184l6-6 6 6" fill="none" stroke="#fff" stroke-width="1.300"/>
<rect x="1307" y="1172" width="16" height="16" fill="#0a0a60"/><path d="M1307 1172h16v6h-16z" fill="#8c1010"/><text x="1311" y="1186" font-family="Liberation Sans" font-weight="bold" font-size="15" fill="#f0d020">?</text>
<path d="M1332 1175h15v11h-15zM1332 1173h5v5h-5zM1340 1186v4M1335 1190h9" fill="none" stroke="#fff"/>
<path d="M1357 1172h11v15a5 5 0 0 1-11 0z" fill="#c8c8c8"/><path d="M1361 1183l3 3M1364 1183l-3 3" stroke="#777"/>
<path d="M1380 1177h3l4-3v12l-4-3h-3z" fill="none" stroke="#fff"/><path d="M1389 1177c1 2 1 4 0 6M1392 1175c2 3 2 7 0 10" fill="none" stroke="#999"/>
<rect x="1403" y="1172" width="15" height="16" fill="#d8d8d8" stroke="#666"/><path d="M1405 1176l2 8 4 1 6-1" fill="none" stroke="#2a9a2a"/><path d="M1404 1186h14" stroke="#d01010" stroke-width="2"/>
<path d="M1435 1173l7 7-7 7-7-7z" fill="#e0202a"/><path d="M1432 1173l-6 7 6 7" fill="none" stroke="#888"/>
<!-- notifications -->
<rect x="1559" y="1169" width="16" height="12" rx="1" fill="#fff"/><path d="M1561 1172h12M1561 1175h12M1561 1178h8" stroke="#333"/>
<circle cx="1574" cy="1188" r="8" fill="#2f2c27" stroke="#999"/><text x="1574" y="1192" text-anchor="middle" font-family="Liberation Sans" font-size="11" fill="#fff">6</text>
<rect x="1596" y="1160" width="1" height="40" fill="#888"/>
</svg>
</body></html>
